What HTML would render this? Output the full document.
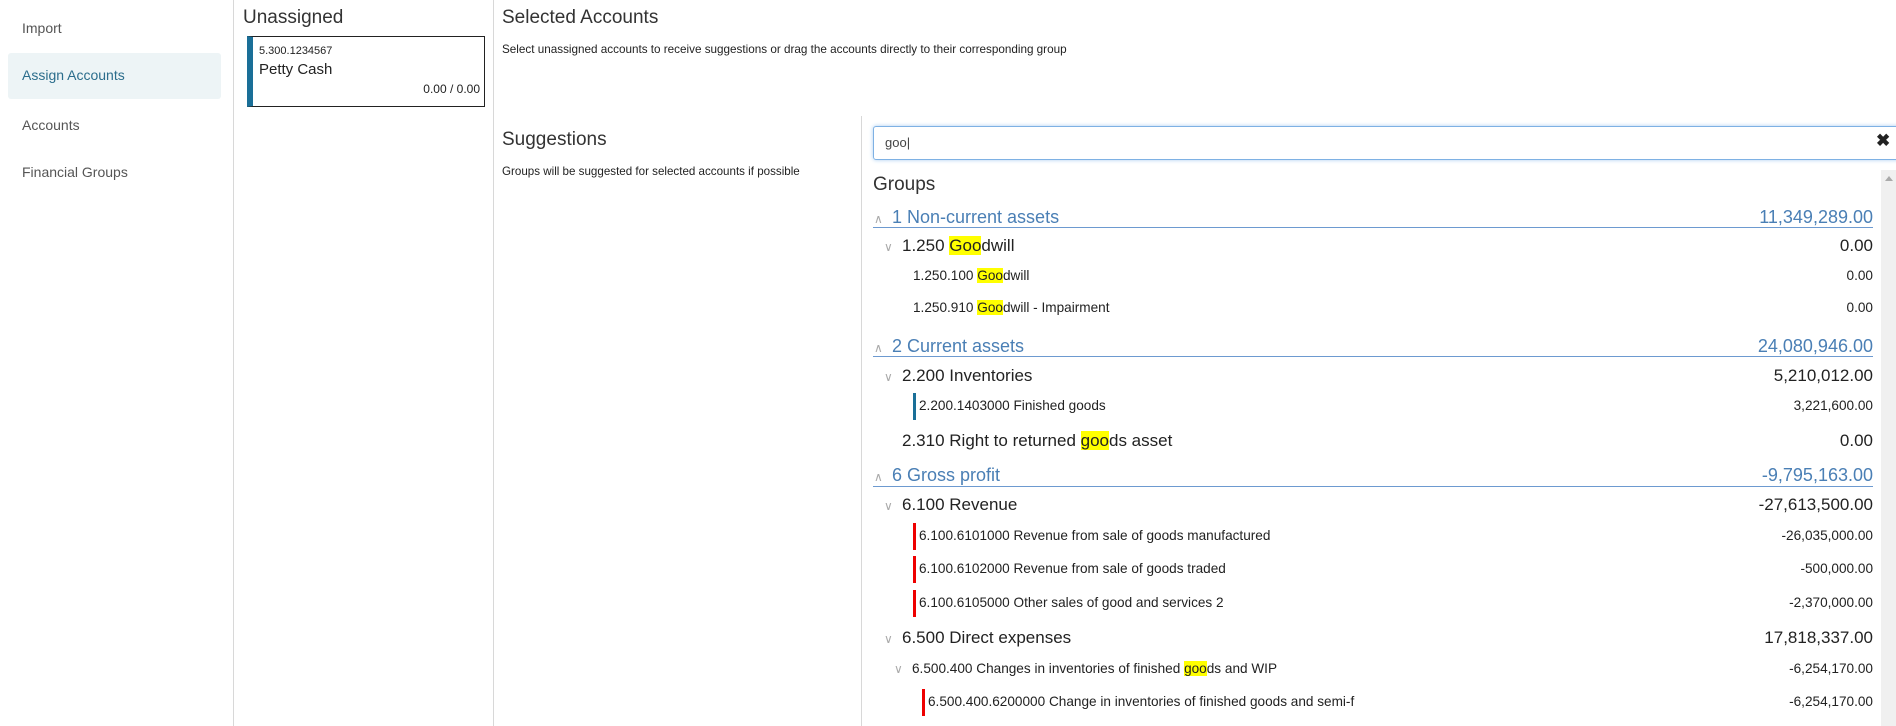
<!DOCTYPE html>
<html><head><meta charset="utf-8"><style>
*{margin:0;padding:0;box-sizing:border-box}
body{width:1896px;height:726px;overflow:hidden;background:#fff;font-family:"Liberation Sans",sans-serif;color:#222;position:relative}
.a{position:absolute;white-space:nowrap}
.vl{position:absolute;width:1px;background:#d8d8d8}
.side{font-size:14px;color:#555;left:22px}
.hl{background:#ff0}
.g{font-size:18px;color:#4a7fb5;left:874px;width:999px}
.g .r,.s .r,.l .r{position:absolute;right:0}
.gl{position:absolute;left:873px;width:1000px;height:1px;background:#6d9ad0}
.s{font-size:17px;color:#222;left:884px;width:989px}
.l{font-size:13.6px;color:#222;width:auto}
.ch{color:#aaa;font-size:12px;display:inline-block;width:18px}
.bar{position:absolute;width:3px;height:27px}
</style></head><body>
<div class="vl" style="left:233px;top:0;height:726px"></div>
<div class="vl" style="left:493px;top:0;height:726px"></div>
<div class="vl" style="left:861px;top:116px;height:610px"></div>

<div class="a" style="left:8px;top:53px;width:213px;height:46px;background:#edf4f6;border-radius:3px"></div>
<div class="a side" style="top:20px">Import</div>
<div class="a side" style="top:67px;color:#2b6d8c">Assign Accounts</div>
<div class="a side" style="top:117px">Accounts</div>
<div class="a side" style="top:164px">Financial Groups</div>

<div class="a" style="left:243px;top:7px;font-size:19px;color:#333">Unassigned</div>
<div class="a" style="left:247px;top:36px;width:238px;height:71px;border:1.5px solid #222;border-left:6px solid #1a6f98">
 <div class="a" style="left:6px;top:8px;font-size:11px">5.300.1234567</div>
 <div class="a" style="left:6px;top:24px;font-size:15px">Petty Cash</div>
 <div class="a" style="right:4px;top:45px;font-size:12px">0.00 / 0.00</div>
</div>

<div class="a" style="left:502px;top:7px;font-size:19px;color:#333">Selected Accounts</div>
<div class="a" style="left:502px;top:43px;font-size:11.7px">Select unassigned accounts to receive suggestions or drag the accounts directly to their corresponding group</div>
<div class="a" style="left:502px;top:129px;font-size:19px;color:#333">Suggestions</div>
<div class="a" style="left:502px;top:165px;font-size:11.6px">Groups will be suggested for selected accounts if possible</div>

<div class="a" style="left:873px;top:126px;width:1030px;height:34px;border:1px solid #7eb1e4;border-radius:3px;box-shadow:0 0 4px #a9cdf0"></div>
<div class="a" style="left:885px;top:135px;font-size:13px;color:#444">goo|</div>
<div class="a" style="left:1876px;top:131px;font-size:17px;font-weight:bold;color:#222">✖</div>
<div class="a" style="left:1881px;top:170px;width:15px;height:556px;background:#f0f0f0"></div>
<div class="a" style="left:1885px;top:176px;width:0;height:0;border-left:4px solid transparent;border-right:4px solid transparent;border-bottom:5px solid #aaa"></div>

<div class="a" style="left:873px;top:174px;font-size:19px;color:#333">Groups</div>

<div class="a g" style="top:207px"><span class="ch">∧</span>1 Non-current assets<span class="r">11,349,289.00</span></div>
<div class="gl" style="top:227px"></div>
<div class="a s" style="top:236px"><span class="ch">∨</span>1.250 <span class="hl">Goo</span>dwill<span class="r">0.00</span></div>
<div class="a l" style="left:913px;top:268px">1.250.100 <span class="hl">Goo</span>dwill</div><div class="a l" style="right:23px;top:268px">0.00</div>
<div class="a l" style="left:913px;top:300px">1.250.910 <span class="hl">Goo</span>dwill - Impairment</div><div class="a l" style="right:23px;top:300px">0.00</div>

<div class="a g" style="top:336px"><span class="ch">∧</span>2 Current assets<span class="r">24,080,946.00</span></div>
<div class="gl" style="top:356px"></div>
<div class="a s" style="top:366px"><span class="ch">∨</span>2.200 Inventories<span class="r">5,210,012.00</span></div>
<div class="bar" style="left:913px;top:393px;background:#1a6f98"></div>
<div class="a l" style="left:919px;top:398px">2.200.1403000 Finished goods</div><div class="a l" style="right:23px;top:398px">3,221,600.00</div>
<div class="a s" style="top:431px;left:902px;width:971px">2.310 Right to returned <span class="hl">goo</span>ds asset<span class="r">0.00</span></div>

<div class="a g" style="top:465px"><span class="ch">∧</span>6 Gross profit<span class="r">-9,795,163.00</span></div>
<div class="gl" style="top:486px"></div>
<div class="a s" style="top:495px"><span class="ch">∨</span>6.100 Revenue<span class="r">-27,613,500.00</span></div>
<div class="bar" style="left:913px;top:523px;background:#e00"></div>
<div class="a l" style="left:919px;top:528px">6.100.6101000 Revenue from sale of goods manufactured</div><div class="a l" style="right:23px;top:528px">-26,035,000.00</div>
<div class="bar" style="left:913px;top:556px;background:#e00"></div>
<div class="a l" style="left:919px;top:561px">6.100.6102000 Revenue from sale of goods traded</div><div class="a l" style="right:23px;top:561px">-500,000.00</div>
<div class="bar" style="left:913px;top:590px;background:#e00"></div>
<div class="a l" style="left:919px;top:595px">6.100.6105000 Other sales of good and services 2</div><div class="a l" style="right:23px;top:595px">-2,370,000.00</div>
<div class="a s" style="top:628px"><span class="ch">∨</span>6.500 Direct expenses<span class="r">17,818,337.00</span></div>
<div class="a l" style="left:894px;top:661px"><span class="ch">∨</span>6.500.400 Changes in inventories of finished <span class="hl">goo</span>ds and WIP</div><div class="a l" style="right:23px;top:661px">-6,254,170.00</div>
<div class="bar" style="left:922px;top:689px;background:#e00"></div>
<div class="a l" style="left:928px;top:694px">6.500.400.6200000 Change in inventories of finished goods and semi-f</div><div class="a l" style="right:23px;top:694px">-6,254,170.00</div>
</body></html>
